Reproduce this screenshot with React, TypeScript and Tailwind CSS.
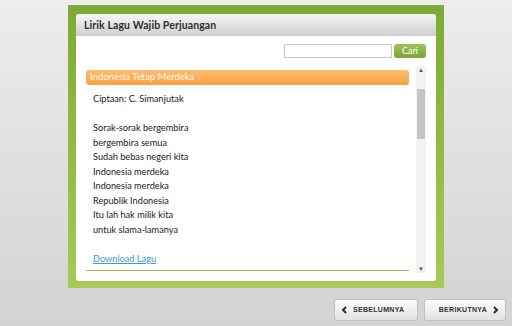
import React from "react";

const lines = [
  "Sorak-sorak bergembira",
  "bergembira semua",
  "Sudah bebas negeri kita",
  "Indonesia merdeka",
  "Indonesia merdeka",
  "Republik Indonesia",
  "Itu lah hak milik kita",
  "untuk slama-lamanya",
];

function Chevron({ dir }: { dir: "left" | "right" }) {
  return (
    <svg width="7" height="8" viewBox="0 0 7 8" className="shrink-0">
      <path
        d={dir === "left" ? "M5 1 L2 4 L5 7" : "M2 1 L5 4 L2 7"}
        fill="none"
        stroke="#2b2b2b"
        strokeWidth="2"
        strokeLinejoin="miter"
      />
    </svg>
  );
}

export default function App() {
  return (
    <div
      className="w-[512px] h-[326px] overflow-hidden bg-gradient-to-b from-[#ededed] to-[#d3d3d3] pt-[5px] flex flex-col"
      style={{ fontFamily: "Lato, 'Open Sans', sans-serif" }}
    >
      <div className="ml-[68px] w-[376px] h-[283px] bg-gradient-to-b from-[#7daa35] to-[#a7c957] pt-[9px] pl-[8px] pr-[8px] pb-[7px]">
        <div className="w-full h-full bg-white rounded-[3px] flex flex-col overflow-hidden">
          <div className="h-[22px] bg-gradient-to-b from-[#f6f6f6] to-[#cfcfcf] flex items-center pl-[8px] pt-[1px] rounded-t-[3px]">
            <span className="text-[10.5px] font-bold text-[#2e2e2e] tracking-[0.1px]">Lirik Lagu Wajib Perjuangan</span>
          </div>
          <div className="flex justify-end items-center mt-[8px] pr-[10px] gap-[2px]">
            <div className="w-[108px] h-[14px] border border-[#c8c8c8] bg-white" />
            <div className="w-[32px] h-[14px] rounded-[3px] bg-gradient-to-b from-[#9bc257] to-[#7aa636] flex items-center justify-center text-[9px] text-white">
              Cari
            </div>
          </div>
          <div className="flex mt-[8px] pl-[10px] pr-[10px] h-[207px]">
            <div className="flex-1 flex flex-col pt-[4px]">
              <div className="h-[15px] rounded-[3px] bg-gradient-to-b from-[#fdbd70] to-[#f9a043] flex items-center pl-[4px] text-[9.5px] text-[#fff8ee] mr-[7px]">
                Indonesia Tetap Merdeka
              </div>
              <div className="pl-[7px] mt-[7px] text-[9.2px] leading-[14.5px] text-[#222]">
                <div>Ciptaan: C. Simanjutak</div>
                <div>&nbsp;</div>
                {lines.map((l, i) => (
                  <div key={i}>{l}</div>
                ))}
                <div>&nbsp;</div>
                <div className="text-[#3d9ad6] underline">Download Lagu</div>
              </div>
              <div className="mt-auto mb-[2px] mr-[7px] h-px bg-[#aab467]" />
            </div>
            <div className="w-[10px] bg-[#f2f2f2] flex flex-col items-center">
              <div className="text-[6px] leading-[8px] text-[#555]">▲</div>
              <div className="w-[8px] h-[50px] mt-[15px] bg-[#c4c4c4]" />
              <div className="flex-1" />
              <div className="text-[6px] leading-[8px] text-[#555]">▼</div>
            </div>
          </div>
        </div>
      </div>
      <div
        className="flex justify-end gap-[6px] mt-[11px] pr-[6px]"
        style={{ fontFamily: "'Liberation Sans', Arial, sans-serif" }}
      >
        <div className="w-[84px] h-[22px] rounded-[3px] border border-[#c2c2c2] bg-gradient-to-b from-[#fbfbfb] to-[#e2e2e2] flex items-center pl-[6px] gap-[5px] text-[7px] font-bold tracking-[0.3px] text-[#333]">
          <Chevron dir="left" />
          SEBELUMNYA
        </div>
        <div className="w-[82px] h-[22px] rounded-[3px] border border-[#c2c2c2] bg-gradient-to-b from-[#fbfbfb] to-[#e2e2e2] flex items-center justify-end pr-[6px] gap-[5px] text-[7px] font-bold tracking-[0.3px] text-[#333]">
          BERIKUTNYA
          <Chevron dir="right" />
        </div>
      </div>
    </div>
  );
}
